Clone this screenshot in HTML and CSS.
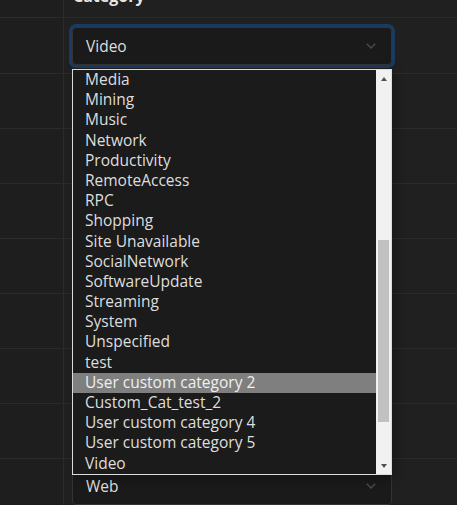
FILE: index.html
```html
<!DOCTYPE html>
<html>
<head>
<meta charset="utf-8">
<link rel="stylesheet" href="styles.css">
</head>
<body>
<div class="table">
  <div class="row head">
    <div class="c1"></div>
    <div class="c2"><span class="htext">Category</span></div>
  </div>
  <div class="row first">
    <div class="c1"></div>
    <div class="c2">
      <div class="select focus"><span>Video</span><svg class="chev" width="10" height="6" viewBox="0 0 10 6"><polyline points="0.8,0.8 5,5 9.2,0.8" fill="none" stroke="#4b4b4b" stroke-width="1.4"/></svg></div>
    </div>
  </div>
  <div class="row"><div class="c1"></div><div class="c2"><div class="select"><span>Web</span><svg class="chev" width="10" height="6" viewBox="0 0 10 6"><polyline points="0.8,0.8 5,5 9.2,0.8" fill="none" stroke="#4b4b4b" stroke-width="1.4"/></svg></div></div></div>
  <div class="row"><div class="c1"></div><div class="c2"><div class="select"><span>Web</span><svg class="chev" width="10" height="6" viewBox="0 0 10 6"><polyline points="0.8,0.8 5,5 9.2,0.8" fill="none" stroke="#4b4b4b" stroke-width="1.4"/></svg></div></div></div>
  <div class="row"><div class="c1"></div><div class="c2"><div class="select"><span>Web</span><svg class="chev" width="10" height="6" viewBox="0 0 10 6"><polyline points="0.8,0.8 5,5 9.2,0.8" fill="none" stroke="#4b4b4b" stroke-width="1.4"/></svg></div></div></div>
  <div class="row"><div class="c1"></div><div class="c2"><div class="select"><span>Web</span><svg class="chev" width="10" height="6" viewBox="0 0 10 6"><polyline points="0.8,0.8 5,5 9.2,0.8" fill="none" stroke="#4b4b4b" stroke-width="1.4"/></svg></div></div></div>
  <div class="row"><div class="c1"></div><div class="c2"><div class="select"><span>Web</span><svg class="chev" width="10" height="6" viewBox="0 0 10 6"><polyline points="0.8,0.8 5,5 9.2,0.8" fill="none" stroke="#4b4b4b" stroke-width="1.4"/></svg></div></div></div>
  <div class="row"><div class="c1"></div><div class="c2"><div class="select"><span>Web</span><svg class="chev" width="10" height="6" viewBox="0 0 10 6"><polyline points="0.8,0.8 5,5 9.2,0.8" fill="none" stroke="#4b4b4b" stroke-width="1.4"/></svg></div></div></div>
  <div class="row"><div class="c1"></div><div class="c2"><div class="select"><span>Web</span><svg class="chev" width="10" height="6" viewBox="0 0 10 6"><polyline points="0.8,0.8 5,5 9.2,0.8" fill="none" stroke="#4b4b4b" stroke-width="1.4"/></svg></div></div></div>
  <div class="row"><div class="c1"></div><div class="c2"><div class="select"><span>Web</span><svg class="chev" width="10" height="6" viewBox="0 0 10 6"><polyline points="0.8,0.8 5,5 9.2,0.8" fill="none" stroke="#4b4b4b" stroke-width="1.4"/></svg></div></div></div>
</div>

<div class="dropdown">
  <div class="options">
    <div class="opt">Media</div>
    <div class="opt">Mining</div>
    <div class="opt">Music</div>
    <div class="opt">Network</div>
    <div class="opt">Productivity</div>
    <div class="opt">RemoteAccess</div>
    <div class="opt">RPC</div>
    <div class="opt">Shopping</div>
    <div class="opt">Site Unavailable</div>
    <div class="opt">SocialNetwork</div>
    <div class="opt">SoftwareUpdate</div>
    <div class="opt">Streaming</div>
    <div class="opt">System</div>
    <div class="opt">Unspecified</div>
    <div class="opt">test</div>
    <div class="opt hover">User custom category 2</div>
    <div class="opt">Custom_Cat_test_2</div>
    <div class="opt">User custom category 4</div>
    <div class="opt">User custom category 5</div>
    <div class="opt">Video</div>
  </div>
  <div class="scrollbar">
    <div class="sbtn"><span class="tri up"></span></div>
    <div class="track"><div class="thumb"></div></div>
    <div class="sbtn"><span class="tri down"></span></div>
  </div>
</div>
</body>
</html>
```
FILE: styles.css
```css
html, body {
  margin: 0;
  padding: 0;
  background: #1f1f1f;
  height: 100%;
  overflow: hidden;
}
body {
  font-family: "Open Sans", "Noto Sans", sans-serif;
  color: #dedede;
}
.table {
  display: flex;
  flex-direction: column;
}
.row {
  display: flex;
  flex: none;
  border-bottom: 1px solid #2b2b2b;
}
.c1 {
  width: 63px;
  border-right: 1px solid #2b2b2b;
  background: #1e1e1e;
  flex: none;
}
.c2 {
  flex: 1;
  padding: 8px;
  background: #202020;
}
.head .c2 {
  height: 17px;
  padding: 0 8px 0 9px;
  box-sizing: border-box;
  overflow: hidden;
}
.htext {
  display: block;
  font-weight: 700;
  font-size: 16px;
  line-height: 16px;
  margin-top: -12px;
  color: #e6e6e6;
}
.first .c2 {
  padding-top: 9px;
}
.select {
  width: 320px;
  height: 38px;
  box-sizing: border-box;
  border: 1px solid #333333;
  border-radius: 4px;
  background: #1a1a1a;
  display: flex;
  align-items: center;
  justify-content: space-between;
  padding: 0 15px 0 13px;
  font-size: 15.5px;
  color: #dedede;
}
.select.focus {
  box-shadow: 0 0 0 3px #1b3a5f;
}
.chev {
  display: block;
}
.dropdown {
  position: absolute;
  left: 72px;
  top: 69px;
  width: 320px;
  height: 406px;
  box-sizing: border-box;
  border: 1px solid #dcdcdc;
  background: #1b1b1b;
  display: flex;
  box-shadow: 3px 3px 10px rgba(0, 0, 0, 0.25);
}
.options {
  flex: 1;
  display: flex;
  flex-direction: column;
  overflow: hidden;
}
.opt {
  height: 20.2px;
  flex: none;
  line-height: 18px;
  padding-left: 12px;
  font-size: 15.5px;
  color: #dedede;
  white-space: nowrap;
}
.opt.hover {
  background: #7f7f7f;
  color: #f0f0f0;
}
.scrollbar {
  width: 15px;
  flex: none;
  background: #f1f1f1;
  display: flex;
  flex-direction: column;
}
.sbtn {
  height: 17px;
  display: flex;
  align-items: center;
  justify-content: center;
  flex: none;
}
.tri {
  width: 0;
  height: 0;
  border-left: 3.5px solid transparent;
  border-right: 3.5px solid transparent;
}
.tri.up {
  border-bottom: 4px solid #505050;
}
.tri.down {
  border-top: 4px solid #505050;
}
.track {
  flex: 1;
  padding: 0 2px;
}
.thumb {
  margin-top: 153px;
  height: 182px;
  background: #c1c1c1;
}
```
